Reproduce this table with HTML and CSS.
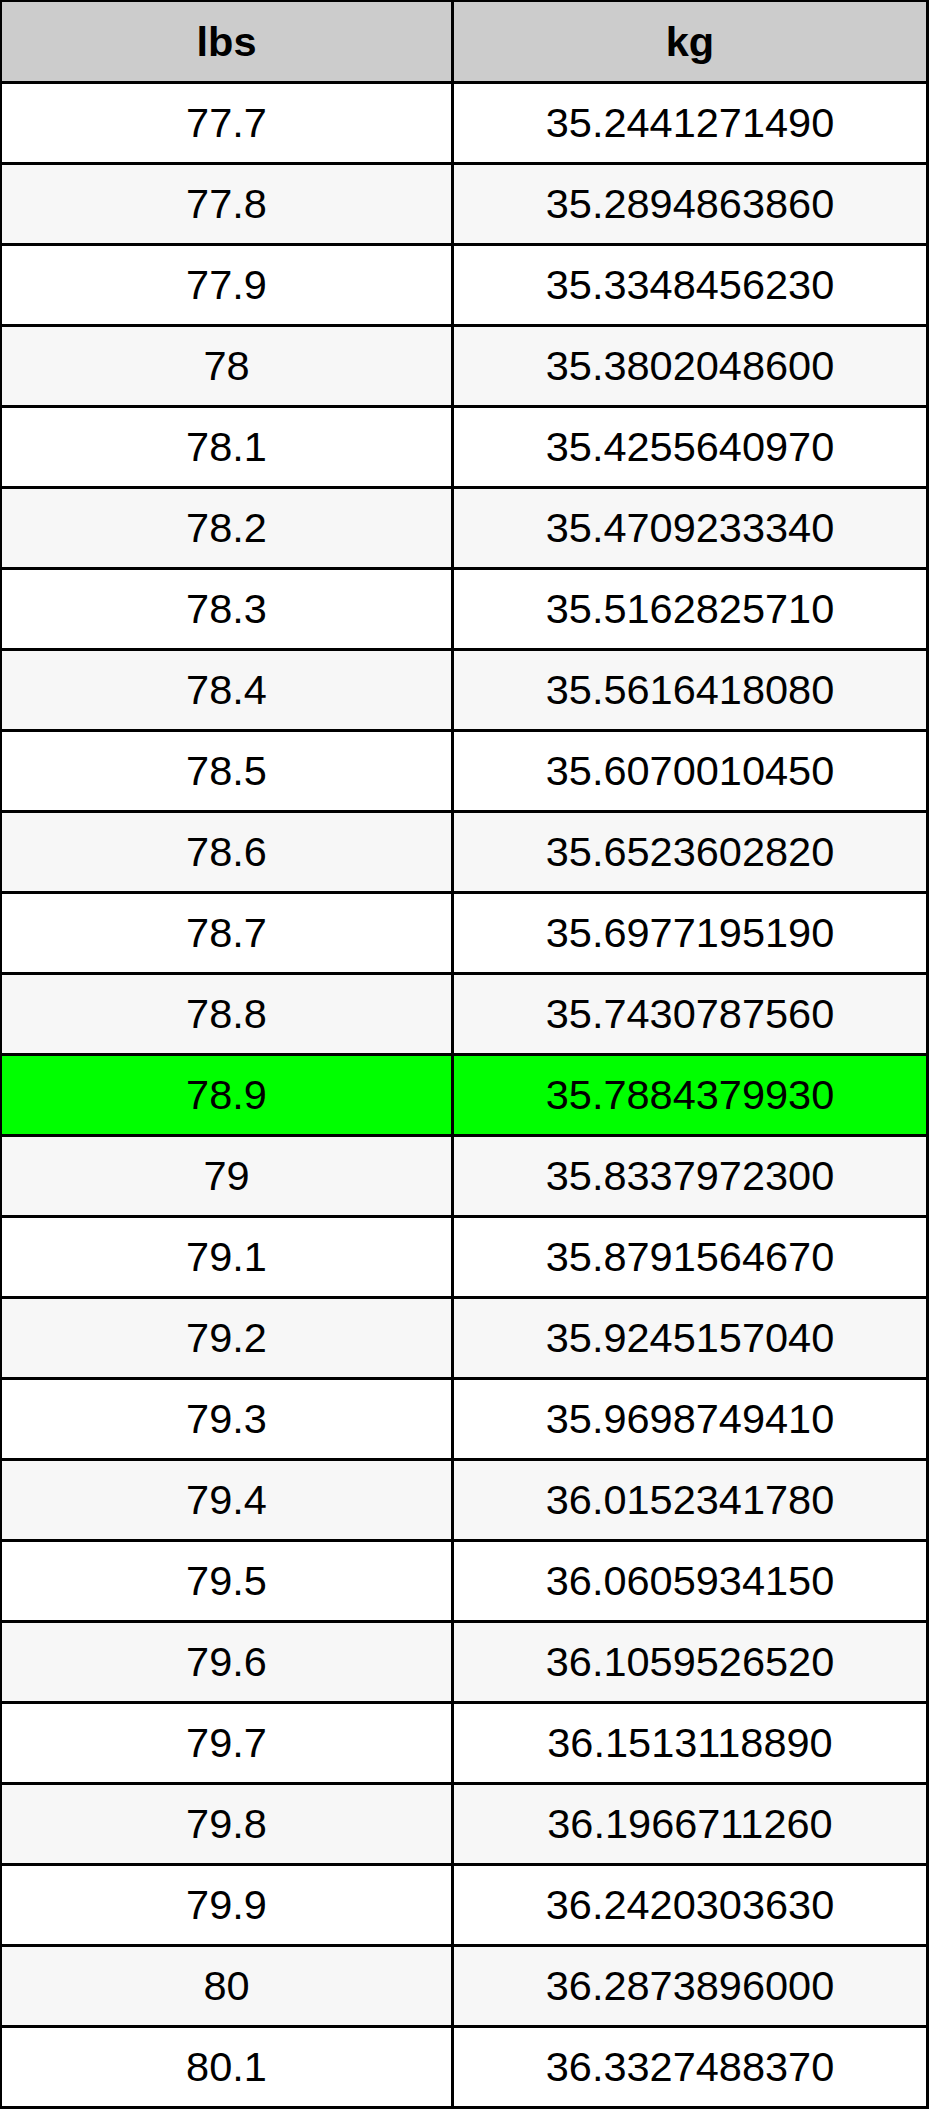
FILE: index.html
```html
<!DOCTYPE html>
<html>
<head>
<meta charset="utf-8">
<link rel="stylesheet" href="styles.css">
</head>
<body>
<div class="table">
  <div class="row head"><div class="cell left">lbs</div><div class="cell right">kg</div></div>
  <div class="row"><div class="cell left">77.7</div><div class="cell right">35.2441271490</div></div>
  <div class="row alt"><div class="cell left">77.8</div><div class="cell right">35.2894863860</div></div>
  <div class="row"><div class="cell left">77.9</div><div class="cell right">35.3348456230</div></div>
  <div class="row alt"><div class="cell left">78</div><div class="cell right">35.3802048600</div></div>
  <div class="row"><div class="cell left">78.1</div><div class="cell right">35.4255640970</div></div>
  <div class="row alt"><div class="cell left">78.2</div><div class="cell right">35.4709233340</div></div>
  <div class="row"><div class="cell left">78.3</div><div class="cell right">35.5162825710</div></div>
  <div class="row alt"><div class="cell left">78.4</div><div class="cell right">35.5616418080</div></div>
  <div class="row"><div class="cell left">78.5</div><div class="cell right">35.6070010450</div></div>
  <div class="row alt"><div class="cell left">78.6</div><div class="cell right">35.6523602820</div></div>
  <div class="row"><div class="cell left">78.7</div><div class="cell right">35.6977195190</div></div>
  <div class="row alt"><div class="cell left">78.8</div><div class="cell right">35.7430787560</div></div>
  <div class="row hl"><div class="cell left">78.9</div><div class="cell right">35.7884379930</div></div>
  <div class="row alt"><div class="cell left">79</div><div class="cell right">35.8337972300</div></div>
  <div class="row"><div class="cell left">79.1</div><div class="cell right">35.8791564670</div></div>
  <div class="row alt"><div class="cell left">79.2</div><div class="cell right">35.9245157040</div></div>
  <div class="row"><div class="cell left">79.3</div><div class="cell right">35.9698749410</div></div>
  <div class="row alt"><div class="cell left">79.4</div><div class="cell right">36.0152341780</div></div>
  <div class="row"><div class="cell left">79.5</div><div class="cell right">36.0605934150</div></div>
  <div class="row alt"><div class="cell left">79.6</div><div class="cell right">36.1059526520</div></div>
  <div class="row"><div class="cell left">79.7</div><div class="cell right">36.1513118890</div></div>
  <div class="row alt"><div class="cell left">79.8</div><div class="cell right">36.1966711260</div></div>
  <div class="row"><div class="cell left">79.9</div><div class="cell right">36.2420303630</div></div>
  <div class="row alt"><div class="cell left">80</div><div class="cell right">36.2873896000</div></div>
  <div class="row"><div class="cell left">80.1</div><div class="cell right">36.3327488370</div></div>
</div>
</body>
</html>
```
FILE: styles.css
```css
html, body {
  margin: 0;
  padding: 0;
  background: #ffffff;
}
.table {
  width: 929px;
  box-sizing: border-box;
  border-top: 2px solid #000;
  border-left: 2px solid #000;
  border-right: 3px solid #000;
  font-family: "Liberation Sans", Arial, sans-serif;
  font-size: 41.5px;
  color: #000;
}
.row {
  display: flex;
  height: 78px;
  border-bottom: 3px solid #000;
  background: #ffffff;
}
.row.alt {
  background: #f7f7f7;
}
.row.hl {
  background: #00ff00;
}
.row.head {
  height: 79px;
  background: #cccccc;
  font-weight: bold;
}
.cell {
  display: flex;
  align-items: center;
  justify-content: center;
}
.cell.left {
  width: 449px;
  border-right: 3px solid #000;
}
.cell.right {
  width: 472px;
}
```
